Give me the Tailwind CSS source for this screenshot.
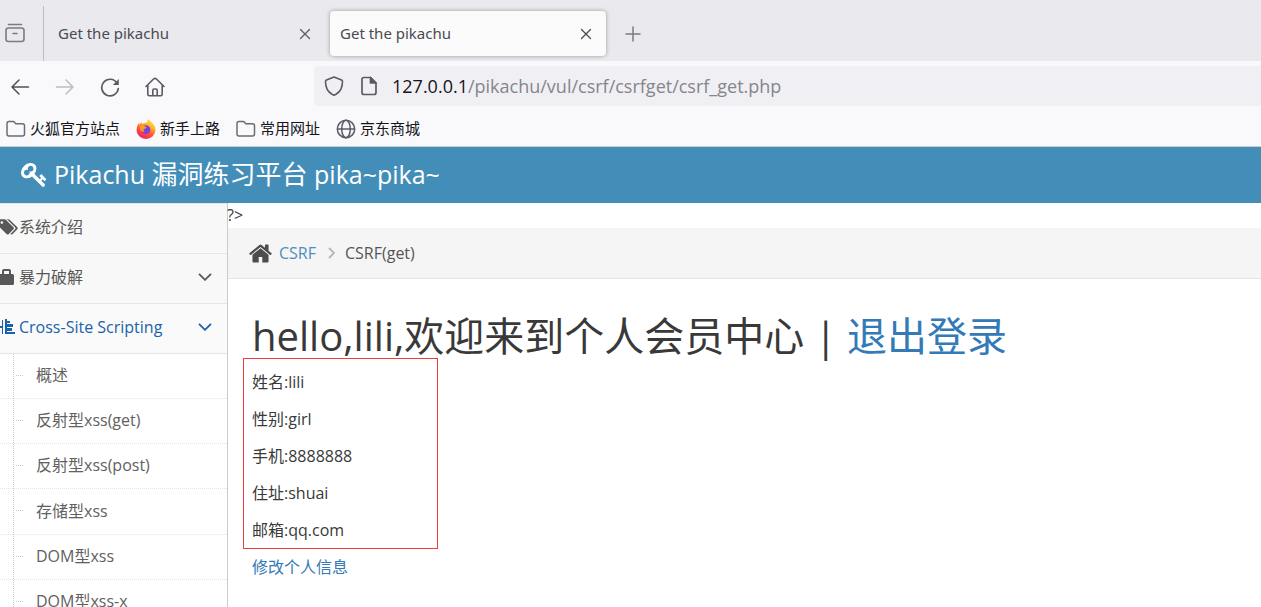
<!DOCTYPE html>
<html lang="zh-CN">
<head>
<meta charset="utf-8">
<meta name="viewport" content="width=device-width, initial-scale=1">
<title>Get the pikachu</title>
<script src="https://cdn.jsdelivr.net/npm/@tailwindcss/browser@4"></script>
</head>
<body class="flex h-screen flex-col overflow-hidden bg-white font-['Open_Sans','Noto_Sans_CJK_SC',sans-serif] text-base text-[#393939]">

<!-- Browser chrome -->
<div class="shrink-0 border-b border-[#ccc] bg-[#f9f9fb] font-['Noto_Sans','Noto_Sans_CJK_SC',sans-serif] text-[15px] text-[#15141a]">
  <div class="flex h-[61px] items-center bg-[#eae9ee] text-[#4a4a52]">
    <button class="ml-1 mr-[17px] mt-1 shrink-0" aria-label="Recent tabs">
      <svg class="size-[22px]" viewBox="0 0 22 22" fill="none" stroke="#7b7b83" stroke-width="1.6" stroke-linecap="round" stroke-linejoin="round"><path d="M4.5 2.500h13"/><rect x="2" y="6" width="18" height="13.500" rx="2.500"/><path d="M9 11.500h4"/></svg>
    </button>
    <div class="mt-1.5 h-[55px] w-px bg-[#bcbcc4]"></div>
    <div class="ml-1 flex h-[45px] w-[277px] items-center justify-between mt-1.5 pl-2.5 pr-3.5">
      <span>Get the pikachu</span>
      <button aria-label="Close tab"><svg class="size-3" viewBox="0 0 12 12" stroke="#5b5b66" stroke-width="1.300" stroke-linecap="round"><path d="M1.500 1.500l9 9M10.500 1.500l-9 9"/></svg></button>
    </div>
    <div class="ml-[5px] mt-1.5 flex h-[45px] w-[276px] items-center justify-between rounded bg-[#fbfbfb] pl-2.5 pr-3.5 shadow-[0_0_4px_rgba(0,0,0,0.35)]">
      <span>Get the pikachu</span>
      <button aria-label="Close tab"><svg class="size-3" viewBox="0 0 12 12" stroke="#4a4a52" stroke-width="1.300" stroke-linecap="round"><path d="M1.500 1.500l9 9M10.500 1.500l-9 9"/></svg></button>
    </div>
    <button class="ml-[19px] mt-1.5" aria-label="New tab"><svg class="size-4" viewBox="0 0 16 16" stroke="#7b7b83" stroke-width="1.500" stroke-linecap="round"><path d="M8 1v14M1 8h14"/></svg></button>
  </div>
  <div class="flex h-[50px] items-center">
    <div class="flex w-[314px] shrink-0 items-center gap-[25px] pl-[10px] pt-0.5">
      <button aria-label="Back"><svg class="size-5" viewBox="0 0 20 20" fill="none" stroke="#4f4f58" stroke-width="1.500" stroke-linecap="round" stroke-linejoin="round"><path d="M18.500 10h-16.500M9 3l-7 7 7 7"/></svg></button>
      <button aria-label="Forward"><svg class="size-5" viewBox="0 0 20 20" fill="none" stroke="#bbbbc1" stroke-width="1.500" stroke-linecap="round" stroke-linejoin="round"><path d="M1.500 10h16.500M11 3l7 7-7 7"/></svg></button>
      <button aria-label="Reload"><svg class="size-5" viewBox="0 0 20 20" fill="none" stroke="#5b5b66" stroke-width="1.700" stroke-linecap="round"><path d="M17 6a8.300 8.300 0 1 0 1.300 5.500"/><path d="M18.800 2v6h-6z" fill="#5b5b66" stroke="none"/></svg></button>
      <button aria-label="Home"><svg class="size-5" viewBox="0 0 20 20" fill="none" stroke="#5b5b66" stroke-width="1.600" stroke-linecap="round" stroke-linejoin="round"><path d="M1 9.500l7.800-7.700q1.200-1 2.400 0L19 9.500M2.800 8v9.200q0 1.500 1.500 1.500h11.400q1.500 0 1.500-1.500V8M7.800 18.500v-5q0-1.500 1.200-1.500h2q1.200 0 1.200 1.500v5"/></svg></button>
    </div>
    <div class="flex h-10 min-w-0 flex-1 items-center rounded-l bg-[#f0f0f4] pl-2.5">
      <svg class="size-5 shrink-0" viewBox="0 0 20 20" fill="none" stroke="#5b5b66" stroke-width="1.600" stroke-linejoin="round"><path d="M10 1L17.500 4q1 .4 1 1.500 0 9-6.500 12.700l-2 1-2-1Q1.500 14.500 1.500 5.500q0-1.100 1-1.500z"/></svg>
      <svg class="ml-[17px] h-5 w-4 shrink-0" viewBox="0 0 16 20" fill="none" stroke="#5b5b66" stroke-width="1.700" stroke-linejoin="round"><path d="M3 1.500h6.500l5.500 5.500v9.500q0 2-2 2H3q-2 0-2-2v-13q0-2 2-2z"/><path d="M9.500 1.500V7H15z" fill="#5b5b66"/></svg>
      <input aria-label="Address" class="sr-only" value="127.0.0.1/pikachu/vul/csrf/csrfget/csrf_get.php">
      <span class="ml-[15px] truncate font-['Open_Sans',sans-serif] text-lg text-[#85858d]"><span class="text-[#15141a]">127.0.0.1</span>/pikachu/vul/csrf/csrfget/csrf_get.php</span>
    </div>
  </div>
  <nav class="flex h-[35px] items-center gap-4 pl-1.5" aria-label="Bookmarks">
    <a href="#" class="flex items-center gap-1"><svg class="size-5" viewBox="0 0 20 20" fill="none" stroke="#6b6b75" stroke-width="1.500" stroke-linejoin="round"><path d="M3 2.500h4.200q.8 0 1.300.7l1 1.500H16.500q2 0 2 2V15q0 2-2 2H3q-2 0-2-2V4.500q0-2 2-2z"/></svg>火狐官方站点</a>
    <a href="#" class="flex items-center gap-1"><svg class="size-5" viewBox="0 0 20 20"><defs><linearGradient id="ff" x1=".85" y1="0" x2=".3" y2="1"><stop offset="0" stop-color="#fff14a"/><stop offset=".35" stop-color="#ffb22a"/><stop offset=".62" stop-color="#ff5a32"/><stop offset="1" stop-color="#f01d67"/></linearGradient></defs><path d="M12.500 0q1.300 1.500 2.500 2.700Q19.500 6.500 19.500 11A9.500 9 0 0 1 .5 11Q.5 7 3 4l.5 1.500 2-2.500.5 2q2-1.500 5-1.500 0-2 1.500-3.500z" fill="url(#ff)"/><path d="M7 7.500q3.500-2.500 6.500.5 2 4-1 6.300-3 1.700-5.500-.3-1.500-1.500-1-3.500l4-1z" fill="#7542e5"/><path d="M3.500 6.500q2-1 4 .3l3 1.200q-.3 1.500-2.800 1.800-.7 1.800 1 2.700-3 1-4.700-1.500z" fill="#ff9a28"/></svg>新手上路</a>
    <a href="#" class="flex items-center gap-1"><svg class="size-5" viewBox="0 0 20 20" fill="none" stroke="#6b6b75" stroke-width="1.500" stroke-linejoin="round"><path d="M3 2.500h4.200q.8 0 1.300.7l1 1.500H16.500q2 0 2 2V15q0 2-2 2H3q-2 0-2-2V4.500q0-2 2-2z"/></svg>常用网址</a>
    <a href="#" class="flex items-center gap-1"><svg class="size-5" viewBox="0 0 20 20" fill="none" stroke="#5b5b66" stroke-width="1.500"><circle cx="10" cy="10" r="8.700"/><ellipse cx="10" cy="10" rx="4.300" ry="8.700"/><path d="M1.500 10h17"/></svg>京东商城</a>
  </nav>
</div>

<!-- Site header -->
<header class="flex h-14 shrink-0 items-center bg-[#438eb9] pb-0.5 pl-[21px] text-white">
  <a href="#" class="flex items-center gap-1.5 text-[25px]">
    <svg class="size-[27px]" viewBox="0 0 1792 1792" fill="currentColor"><path d="M832 512q0-80-56-136t-136-56-136 56-56 136q0 42 19 83-41-19-83-19-80 0-136 56t-56 136 56 136 136 56 136-56 56-136q0-42-19-83 41 19 83 19 80 0 136-56t56-136zm851 704q0 17-49 66t-66 49q-9 0-28.500-16t-36.500-33-38.500-40-24.500-26l-96 96 220 220q28 28 28 68 0 42-39 81t-81 39q-40 0-68-28l-671-671q-176 131-365 131-163 0-265.500-102.500t-102.500-265.500q0-160 95-313t248-248 313-95q163 0 265.500 102.500t102.500 265.500q0 189-131 365l355 355 96-96q-3-3-26-24.500t-40-38.500-33-36.500-16-28.500q0-17 49-66t66-49q13 0 23 10 6 6 46 44.500t82 79.500 86.500 86 73 78 28.500 41z"/></svg>
    <span>Pikachu <span class="text-[26px]">漏洞练习平台</span> pika~pika~</span>
  </a>
</header>

<div class="flex min-h-0 flex-1">
  <!-- Sidebar -->
  <nav class="w-[228px] shrink-0 overflow-hidden border-r border-[#ccc] bg-white text-[#585858]" aria-label="Sidebar">
    <a href="#" class="flex h-[51px] items-center border-y border-[#e5e5e5] bg-[#f8f8f8] pb-1">
      <svg class="-ml-px mr-px h-[18px] w-[19px]" viewBox="0 0 1835 1792" fill="currentColor"><path d="M384 448q0-53-37.500-90.500t-90.500-37.500-90.500 37.500-37.500 90.500 37.500 90.500 90.500 37.500 90.500-37.500 37.500-90.500zm1067 576q0 53-37 90l-491 492q-39 37-91 37-53 0-90-37l-715-716q-38-37-64.500-101t-26.500-117v-416q0-52 38-90t90-38h416q53 0 117 26.500t102 64.500l715 714q37 39 37 91zm384 0q0 53-37 90l-491 492q-39 37-91 37-36 0-59-14t-53-45l470-470q37-37 37-90 0-52-37-91l-715-714q-38-38-102-64.500t-117-26.500h224q53 0 117 26.500t102 64.500l715 714q37 39 37 91z"/></svg>
      <span>系统介绍</span>
    </a>
    <a href="#" class="flex h-[50px] items-center border-b border-[#e5e5e5] bg-[#f8f8f8] pb-1 pr-[15px]">
      <svg class="mr-[5px] h-[18px] w-3.5" viewBox="0 0 14 18" fill="currentColor"><path fill-rule="evenodd" d="M2 6V3Q2 1 4 1h5q2 0 2 2v3h1.500Q14 6 14 7.500v8q0 1.500-1.500 1.500H0V6zm2 0h5V3H4z"/></svg>
      <span class="flex-1">暴力破解</span>
      <svg class="h-2 w-3.5" viewBox="0 0 14 8" fill="none" stroke="currentColor" stroke-width="1.800"><path d="M1 .8l6 6 6-6"/></svg>
    </a>
    <a href="#" class="flex h-[50px] items-center border-b border-[#e5e5e5] bg-[#fafafa] pb-1 pr-[15px] text-[#1963aa]">
      <svg class="mr-1 h-4 w-[15px]" viewBox="0 0 15 16" fill="currentColor"><path d="M0 7h3v2H0zM2 1h1v14H2zM5 0h2v13h8v2H5zM7 2h3v2H7zM7 5h6v3H7zM7 9h5v3H7z"/></svg>
      <span class="flex-1">Cross-Site Scripting</span>
      <svg class="h-2 w-3.5" viewBox="0 0 14 8" fill="none" stroke="currentColor" stroke-width="1.800"><path d="M1 .8l6 6 6-6"/></svg>
    </a>
    <div class="flex text-[#616161]">
      <div class="w-3.5 shrink-0 border-r border-dotted border-[#b8cfdf]"></div>
      <ul class="-ml-3.5 flex-1">
        <li class="flex h-[45px] items-center border-b border-dotted border-[#e4e4e4] pb-0.5 pl-4"><span class="w-[7px] border-t border-dotted border-[#b8cfdf]"></span><a href="#" class="ml-[13px]">概述</a></li>
        <li class="flex h-[45px] items-center border-b border-dotted border-[#e4e4e4] pb-0.5 pl-4"><span class="w-[7px] border-t border-dotted border-[#b8cfdf]"></span><a href="#" class="ml-[13px]">反射型xss(get)</a></li>
        <li class="flex h-[45px] items-center border-b border-dotted border-[#e4e4e4] pb-0.5 pl-4"><span class="w-[7px] border-t border-dotted border-[#b8cfdf]"></span><a href="#" class="ml-[13px]">反射型xss(post)</a></li>
        <li class="flex h-[46px] items-center border-b border-dotted border-[#e4e4e4] pb-0.5 pl-4"><span class="w-[7px] border-t border-dotted border-[#b8cfdf]"></span><a href="#" class="ml-[13px]">存储型xss</a></li>
        <li class="flex h-[45px] items-center border-b border-dotted border-[#e4e4e4] pb-0.5 pl-4"><span class="w-[7px] border-t border-dotted border-[#b8cfdf]"></span><a href="#" class="ml-[13px]">DOM型xss</a></li>
        <li class="flex h-[45px] items-center border-b border-dotted border-[#e4e4e4] pb-0.5 pl-4"><span class="w-[7px] border-t border-dotted border-[#b8cfdf]"></span><a href="#" class="ml-[13px]">DOM型xss-x</a></li>
      </ul>
    </div>
  </nav>

  <!-- Page content -->
  <main class="min-w-0 flex-1">
    <div class="-ml-px h-[25px] leading-6">?&gt;</div>
    <div class="flex h-[51px] items-center border-b border-[#e5e5e5] bg-[#f5f5f5] pl-5">
      <svg class="mr-1.5 size-[25px]" viewBox="0 0 1792 1792" fill="#4c4c4c"><path d="M1472 992v480q0 26-19 45t-45 19h-384v-384h-256v384h-384q-26 0-45-19t-19-45v-480q0-1 .5-3t.5-3l575-474 575 474q1 2 1 6zm223-69l-62 74q-8 9-21 11h-3q-13 0-21-7l-692-577-692 577q-12 8-24 7-13-2-21-11l-62-74q-8-10-7-23.500t11-21.500l719-599q32-26 76-26t76 26l244 204v-195q0-14 9-23t23-9h192q14 0 23 9t9 23v408l219 182q10 8 11 21.500t-7 23.500z"/></svg>
      <a href="#" class="text-[#4c8fbd]">CSRF</a>
      <svg class="ml-3 mr-2.5 h-3 w-[7px]" viewBox="0 0 7 12" fill="none" stroke="#b2b6bf" stroke-width="1.800"><path d="M1 1l5 5-5 5"/></svg>
      <span class="text-[#555]">CSRF(get)</span>
    </div>
    <div class="pl-[15px] pt-[34px]">
      <h1 class="pl-[9px] text-[40px] leading-[45px]">hello,lili,欢迎来到个人会员中心 | <a href="#" class="text-[#337ab7]">退出登录</a></h1>
      <div class="flex h-[191px] w-[195px] flex-col gap-[13px] border border-[#f23c3c] pl-2 pt-[11px]">
        <p>姓名:lili</p>
        <p>性别:girl</p>
        <p>手机:8888888</p>
        <p>住址:shuai</p>
        <p>邮箱:qq.com</p>
      </div>
      <a href="#" class="mt-1.5 block pl-[9px] text-[#337ab7]">修改个人信息</a>
    </div>
  </main>
</div>
</body>
</html>
